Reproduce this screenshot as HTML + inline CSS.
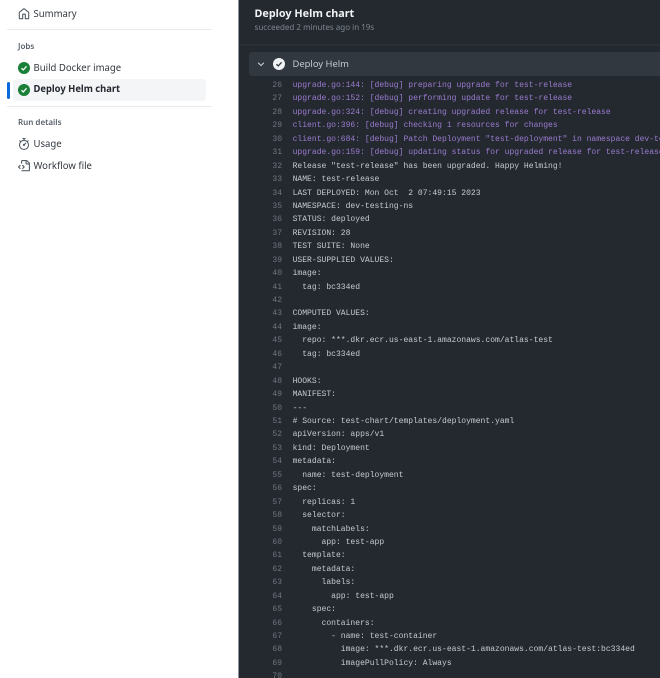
<!DOCTYPE html>
<html><head><meta charset="utf-8">
<style>
html,body{margin:0;padding:0;background:#fff}
#p{position:relative;width:660px;height:678px;overflow:hidden;background:#fff;font-family:"Noto Sans","Noto Sans CJK JP","Liberation Sans",sans-serif;filter:blur(.3px)}
.t{position:absolute;white-space:pre;line-height:14px;font-size:9.55px;color:#32383f}
svg{position:absolute}
#m{position:absolute;left:239px;top:0;width:421px;height:678px;background:#24292f}
.n{position:absolute;left:270px;width:12px;text-align:right;font:8px/13.44px "Liberation Mono",monospace;color:#6e7681}
.l{position:absolute;left:292.6px;white-space:pre;font:8.04px/13.44px "Liberation Mono",monospace;color:#c3cad1}
.v{color:#9a7bd0}
</style></head><body><div id="p">
<div style="position:absolute;left:238px;top:0;width:1px;height:678px;background:#8c959f"></div>
<div id="m"></div>
<div style="position:absolute;left:239px;top:44px;width:421px;height:2px;background:#2a2f35"></div>

<svg style="left:18px;top:8px" width="12" height="12" viewBox="0 0 16 16" fill="#57606a"><path d="M6.906.664a1.749 1.749 0 0 1 2.187 0l5.25 4.2c.415.332.657.835.657 1.367v7.019A1.75 1.75 0 0 1 13.25 15h-3.5a.75.75 0 0 1-.75-.75V9H7v5.25a.75.75 0 0 1-.75.75h-3.500A1.750 1.750 0 0 1 1 13.250V6.230c0-.531.242-1.034.657-1.366l5.250-4.200Zm1.250 1.171a.250.250 0 0 0-.312 0l-5.250 4.200a.250.250 0 0 0-.094.196v7.019c0 .138.112.250.250.250H5.500V8.250a.750.750 0 0 1 .750-.750h3.500a.750.750 0 0 1 .750.750v5.250h2.750a.250.250 0 0 0 .250-.250V6.230a.250.250 0 0 0-.094-.195Z"/></svg>
<div class="t" style="left:33.500px;top:7px">Summary</div>
<div style="position:absolute;left:7px;top:29px;width:205px;height:1px;background:#e8eaed"></div>
<div class="t" style="left:18px;top:40px;font-size:8px;font-weight:600;color:#57606a">Jobs</div>

<svg style="left:18px;top:62px" width="12" height="12" viewBox="0 0 16 16"><circle cx="8" cy="8" r="8" fill="#1a7f37"/><path d="M4.600 8.300 7 10.600l4.400-4.800" fill="none" stroke="#fff" stroke-width="1.700"/></svg>
<div class="t" style="left:33.500px;top:61px">Build Docker image</div>

<div style="position:absolute;left:13px;top:79px;width:193px;height:22px;background:#f4f5f7;border-radius:4px"></div>
<div style="position:absolute;left:7px;top:82px;width:3px;height:17px;background:#0969da;border-radius:2px"></div>
<svg style="left:18px;top:84px" width="12" height="12" viewBox="0 0 16 16"><circle cx="8" cy="8" r="8" fill="#1a7f37"/><path d="M4.600 8.300 7 10.600l4.400-4.800" fill="none" stroke="#fff" stroke-width="1.700"/></svg>
<div class="t" style="left:33.500px;top:82px;font-weight:700;font-size:9.400px;color:#24292f">Deploy Helm chart</div>
<div style="position:absolute;left:7px;top:106px;width:205px;height:1px;background:#e8eaed"></div>
<div class="t" style="left:18px;top:116px;font-size:8px;font-weight:600;color:#57606a">Run details</div>

<svg style="left:18px;top:138px" width="12" height="12" viewBox="0 0 16 16" fill="#57606a"><path d="M5.750.750A.750.750 0 0 1 6.500 0h3a.750.750 0 0 1 0 1.500h-.750v1l-.001.041a6.724 6.724 0 0 1 3.464 1.435l.007-.006.750-.750a.749.749 0 1 1 1.060 1.060l-.750.750-.006.007a6.750 6.750 0 1 1-10.548 0L2.720 5.030l-.750-.750a.749.749 0 0 1 1.060-1.060l.750.750.007.006A6.720 6.720 0 0 1 7.251 2.540v-1.040H6.500a.750.750 0 0 1-.750-.750ZM8 14.500A5.250 5.250 0 1 0 8 4a5.250 5.250 0 0 0 0 10.500Zm.389-6.700 1.330-1.330a.750.750 0 1 1 1.061 1.060L9.450 8.861A1.503 1.503 0 0 1 8 10.750a1.499 1.499 0 1 1 .389-2.950Z"/></svg>
<div class="t" style="left:33.500px;top:137px">Usage</div>

<svg style="left:18px;top:160px" width="12" height="12" viewBox="0 0 16 16" fill="#57606a"><path d="M4 1.750C4 .784 4.784 0 5.750 0h5.586c.464 0 .909.184 1.237.513l2.914 2.914c.329.328.513.773.513 1.237v8.586A1.750 1.750 0 0 1 14.250 15h-9a.750.750 0 0 1 0-1.500h9a.250.250 0 0 0 .250-.250V6h-2.750A1.750 1.750 0 0 1 10 4.250V1.500H5.750a.250.250 0 0 0-.250.250v2.500a.750.750 0 0 1-1.500 0Zm1.720 4.970a.750.750 0 0 1 1.060 0l2 2a.750.750 0 0 1 0 1.060l-2 2a.749.749 0 0 1-1.275-.326.749.749 0 0 1 .215-.734l1.470-1.470-1.470-1.470a.750.750 0 0 1 0-1.060ZM3.280 7.780 1.810 9.250l1.470 1.470a.751.751 0 0 1-.018 1.042.751.751 0 0 1-1.042.018l-2-2a.750.750 0 0 1 0-1.060l2-2a.751.751 0 0 1 1.042.018.751.751 0 0 1 .018 1.042Zm8.220-6.218V4.250c0 .138.112.250.250.250h2.688l-.011-.013-2.914-2.914-.013-.011Z"/></svg>
<div class="t" style="left:33.500px;top:159px">Workflow file</div>

<div class="t" style="left:254.500px;top:7px;font-size:10.800px;font-weight:700;color:#f0f3f6">Deploy Helm chart</div>
<div class="t" style="left:254.500px;top:21px;font-size:8px;color:#7d8590">succeeded 2 minutes ago in 19s</div>

<div style="position:absolute;left:249px;top:52px;width:411px;height:24px;background:#32383f;border-radius:4px 0 0 4px"></div>
<svg style="left:256px;top:59px" width="10" height="10" viewBox="0 0 16 16"><path d="M3.500 6 8 10.500 12.500 6" fill="none" stroke="#d0d7de" stroke-width="1.600"/></svg>
<svg style="left:273px;top:58px" width="12" height="12" viewBox="0 0 16 16"><circle cx="8" cy="8" r="8" fill="#f0f3f6"/><path d="M4.600 8.300 7 10.600l4.400-4.800" fill="none" stroke="#32383f" stroke-width="1.800"/></svg>
<div class="t" style="left:292.500px;top:57px;color:#c3cad1;font-size:9.400px">Deploy Helm</div>

<div class="n" style="top:79px">26</div><div class="l v" style="top:79px">upgrade.go:144: [debug] preparing upgrade for test-release</div>
<div class="n" style="top:92.440px">27</div><div class="l v" style="top:92.440px">upgrade.go:152: [debug] performing update for test-release</div>
<div class="n" style="top:105.880px">28</div><div class="l v" style="top:105.880px">upgrade.go:324: [debug] creating upgraded release for test-release</div>
<div class="n" style="top:119.320px">29</div><div class="l v" style="top:119.320px">client.go:396: [debug] checking 1 resources for changes</div>
<div class="n" style="top:132.760px">30</div><div class="l v" style="top:132.760px">client.go:684: [debug] Patch Deployment "test-deployment" in namespace dev-testing-ns</div>
<div class="n" style="top:146.200px">31</div><div class="l v" style="top:146.200px">upgrade.go:159: [debug] updating status for upgraded release for test-release</div>
<div class="n" style="top:159.640px">32</div><div class="l" style="top:159.640px">Release "test-release" has been upgraded. Happy Helming!</div>
<div class="n" style="top:173.080px">33</div><div class="l" style="top:173.080px">NAME: test-release</div>
<div class="n" style="top:186.520px">34</div><div class="l" style="top:186.520px">LAST DEPLOYED: Mon Oct  2 07:49:15 2023</div>
<div class="n" style="top:199.960px">35</div><div class="l" style="top:199.960px">NAMESPACE: dev-testing-ns</div>
<div class="n" style="top:213.400px">36</div><div class="l" style="top:213.400px">STATUS: deployed</div>
<div class="n" style="top:226.840px">37</div><div class="l" style="top:226.840px">REVISION: 28</div>
<div class="n" style="top:240.280px">38</div><div class="l" style="top:240.280px">TEST SUITE: None</div>
<div class="n" style="top:253.720px">39</div><div class="l" style="top:253.720px">USER-SUPPLIED VALUES:</div>
<div class="n" style="top:267.160px">40</div><div class="l" style="top:267.160px">image:</div>
<div class="n" style="top:280.600px">41</div><div class="l" style="top:280.600px">  tag: bc334ed</div>
<div class="n" style="top:294.040px">42</div>
<div class="n" style="top:307.480px">43</div><div class="l" style="top:307.480px">COMPUTED VALUES:</div>
<div class="n" style="top:320.920px">44</div><div class="l" style="top:320.920px">image:</div>
<div class="n" style="top:334.360px">45</div><div class="l" style="top:334.360px">  repo: ***.dkr.ecr.us-east-1.amazonaws.com/atlas-test</div>
<div class="n" style="top:347.800px">46</div><div class="l" style="top:347.800px">  tag: bc334ed</div>
<div class="n" style="top:361.240px">47</div>
<div class="n" style="top:374.680px">48</div><div class="l" style="top:374.680px">HOOKS:</div>
<div class="n" style="top:388.120px">49</div><div class="l" style="top:388.120px">MANIFEST:</div>
<div class="n" style="top:401.560px">50</div><div class="l" style="top:401.560px">---</div>
<div class="n" style="top:415px">51</div><div class="l" style="top:415px"># Source: test-chart/templates/deployment.yaml</div>
<div class="n" style="top:428.440px">52</div><div class="l" style="top:428.440px">apiVersion: apps/v1</div>
<div class="n" style="top:441.880px">53</div><div class="l" style="top:441.880px">kind: Deployment</div>
<div class="n" style="top:455.320px">54</div><div class="l" style="top:455.320px">metadata:</div>
<div class="n" style="top:468.760px">55</div><div class="l" style="top:468.760px">  name: test-deployment</div>
<div class="n" style="top:482.200px">56</div><div class="l" style="top:482.200px">spec:</div>
<div class="n" style="top:495.640px">57</div><div class="l" style="top:495.640px">  replicas: 1</div>
<div class="n" style="top:509.080px">58</div><div class="l" style="top:509.080px">  selector:</div>
<div class="n" style="top:522.520px">59</div><div class="l" style="top:522.520px">    matchLabels:</div>
<div class="n" style="top:535.960px">60</div><div class="l" style="top:535.960px">      app: test-app</div>
<div class="n" style="top:549.400px">61</div><div class="l" style="top:549.400px">  template:</div>
<div class="n" style="top:562.840px">62</div><div class="l" style="top:562.840px">    metadata:</div>
<div class="n" style="top:576.280px">63</div><div class="l" style="top:576.280px">      labels:</div>
<div class="n" style="top:589.720px">64</div><div class="l" style="top:589.720px">        app: test-app</div>
<div class="n" style="top:603.160px">65</div><div class="l" style="top:603.160px">    spec:</div>
<div class="n" style="top:616.600px">66</div><div class="l" style="top:616.600px">      containers:</div>
<div class="n" style="top:630.040px">67</div><div class="l" style="top:630.040px">        - name: test-container</div>
<div class="n" style="top:643.480px">68</div><div class="l" style="top:643.480px">          image: ***.dkr.ecr.us-east-1.amazonaws.com/atlas-test:bc334ed</div>
<div class="n" style="top:656.920px">69</div><div class="l" style="top:656.920px">          imagePullPolicy: Always</div>
<div class="n" style="top:670.360px">70</div>
</div></body></html>
